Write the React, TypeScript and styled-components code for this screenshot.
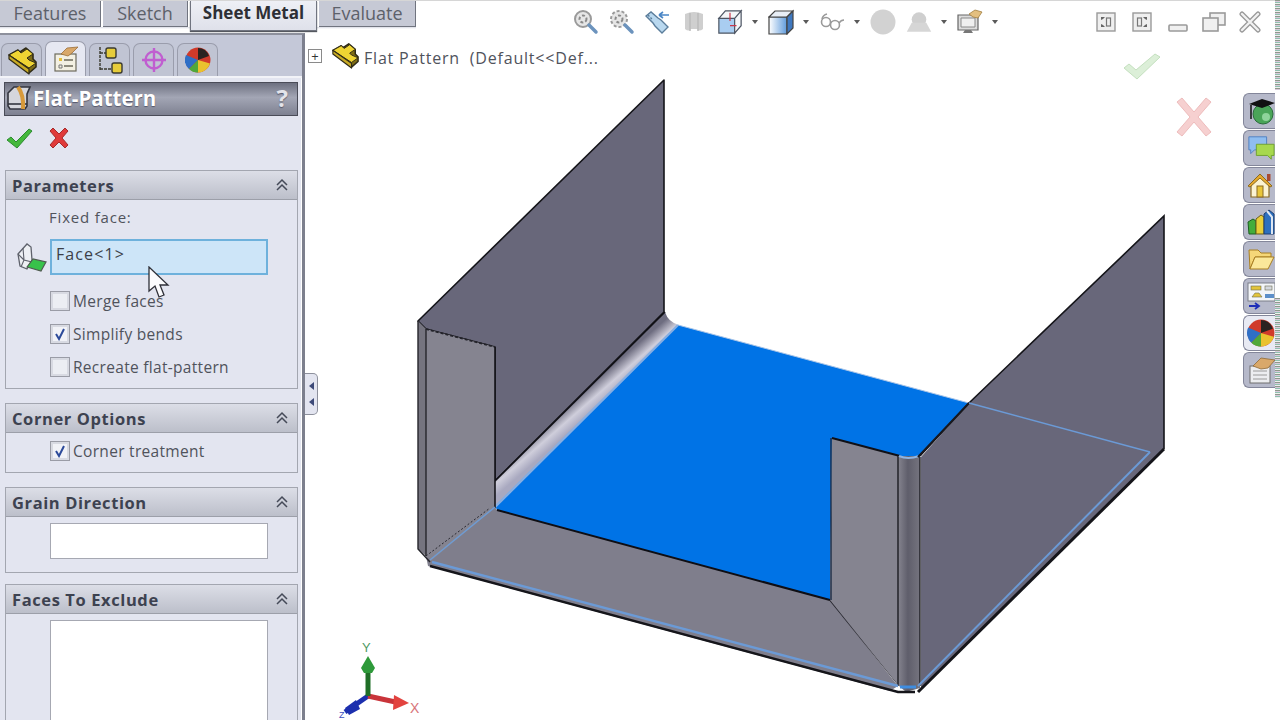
import styled, { createGlobalStyle } from "styled-components";
import { ReactNode } from "react";

const GlobalStyle = createGlobalStyle`
    html, body, #root {
        margin: 0;
        padding: 0;
        width: 1280px;
        height: 720px;
        overflow: hidden;
        background: #ffffff;
    }
    * {
        box-sizing: border-box;
    }
`;

const UI_FONT = `"Open Sans", "Noto Sans", "Liberation Sans", sans-serif`;

const Page = styled.div`
    width: 1280px;
    height: 720px;
    display: flex;
    flex-direction: column;
    font-family: ${UI_FONT};
    color: #3c3f48;
    background: #ffffff;
    overflow: hidden;
`;

const TopBar = styled.div`
    height: 33px;
    flex: none;
    display: flex;
    align-items: flex-start;
    border-top: 1px solid #d6d6d6;
`;

const TabStrip = styled.div`
    width: 416px;
    height: 32px;
    flex: none;
    display: flex;
    align-items: flex-start;
    gap: 2px;
    background: linear-gradient(#ffffff 26px, #d9dbe4 26px, #ffffff 28px);
`;

const RibbonTab = styled.div<{ $active?: boolean; $width: number }>`
    width: ${(p) => p.$width}px;
    height: ${(p) => (p.$active ? 30 : 26)}px;
    display: flex;
    align-items: center;
    justify-content: center;
    padding-bottom: ${(p) => (p.$active ? 6 : 2)}px;
    font-size: ${(p) => (p.$active ? 17 : 18)}px;
    font-weight: ${(p) => (p.$active ? 700 : 400)};
    color: ${(p) => (p.$active ? "#2d2f35" : "#5d616a")};
    background: ${(p) => (p.$active ? "linear-gradient(#eef0f6, #dfe1ea)" : "#c6c9d5")};
    border: 1px solid #70747f;
    border-top: none;
    border-left-width: ${(p) => (p.$active ? 1 : 0)}px;
    box-shadow: ${(p) => (p.$active ? "0 1px 1px #55585f" : "none")};
    white-space: nowrap;
`;

const HeadsUpBar = styled.div`
    flex: none;
    display: flex;
    align-items: center;
    gap: 10px;
    margin: 7px 0 0 157px;
    height: 28px;
`;

const HeadsUpItem = styled.div`
    display: flex;
    align-items: center;
    gap: 9px;
`;

const IconSlot = styled.span`
    width: 26px;
    height: 28px;
    display: flex;
    align-items: center;
    justify-content: center;
`;

const DropCaret = styled.span`
    width: 0;
    height: 0;
    border-left: 3.5px solid transparent;
    border-right: 3.5px solid transparent;
    border-top: 4px solid #5a5a5a;
`;

const WindowButtons = styled.div`
    flex: none;
    display: flex;
    align-items: center;
    margin: 10px 0 0 90px;
`;

const WindowSlot = styled.span`
    width: 36px;
    height: 22px;
    display: flex;
    align-items: center;
    justify-content: center;
`;

const Body = styled.div`
    flex: 1;
    min-height: 0;
    display: flex;
`;

const SidePanel = styled.div`
    width: 305px;
    flex: none;
    display: flex;
    flex-direction: column;
    background: #e3e5f0;
    border-top: 2px solid #8d909c;
    border-right: 3px solid #7d808e;
    box-shadow: inset -1px 0 0 #ffffff;
`;

const FlyoutRow = styled.div`
    height: 43px;
    flex: none;
    display: flex;
    align-items: flex-end;
    gap: 3px;
    padding-left: 1px;
    background: #c4c8d8;
    border-bottom: 2px solid #f2f3f8;
`;

const FlyoutTab = styled.div<{ $active?: boolean }>`
    width: 41px;
    height: ${(p) => (p.$active ? 35 : 33)}px;
    display: flex;
    align-items: center;
    justify-content: center;
    border: 1px solid #9a9dac;
    border-bottom: none;
    border-radius: 7px 7px 0 0;
    background: ${(p) => (p.$active ? "#e6e8f2" : "#c0c4d3")};
`;

const TitleBar = styled.div`
    height: 34px;
    flex: none;
    margin: 4px 4px 0 4px;
    padding: 0 6px 3px 0;
    display: flex;
    align-items: center;
    gap: 0;
    color: #ffffff;
    font-size: 20.5px;
    font-weight: 700;
    background: linear-gradient(#6d7080, #a3a6b5 45%, #7e8191);
    border: 1px solid #4a4c58;
    text-shadow: 0 1px 1px #55576a;
`;

const HelpMark = styled.span`
    margin-left: auto;
    padding-right: 3px;
    font-size: 24px;
    font-weight: 700;
    color: #e3e4ea;
`;

const ConfirmRow = styled.div`
    height: 49px;
    flex: none;
    padding: 0 0 6px 5px;
    display: flex;
    align-items: center;
    gap: 14px;
`;

const SectionBox = styled.section<{ $height: number; $gap: number }>`
    height: ${(p) => p.$height}px;
    flex: none;
    margin: 5px 5px ${(p) => p.$gap}px 5px;
    width: 293px;
    border: 1px solid #a3a6b0;
    border-bottom-width: ${(p) => (p.$gap ? 1 : 0)}px;
    display: flex;
    flex-direction: column;
`;

const SectionHead = styled.div`
    height: 29px;
    flex: none;
    padding: 0 8px 0 6px;
    display: flex;
    align-items: center;
    justify-content: space-between;
    font-size: 16.5px;
    letter-spacing: 0.6px;
    font-weight: 700;
    color: #3d4250;
    background: linear-gradient(#dcdee7, #bcbfca);
    border-bottom: 1px solid #9c9fa9;
`;

const SectionContent = styled.div`
    flex: 1;
    display: flex;
    flex-direction: column;
    padding-left: 44px;
    position: relative;
`;

const FieldLabel = styled.div`
    font-size: 15px;
    line-height: 20px;
    letter-spacing: 0.8px;
    margin: 7px 0 12px -1px;
    color: #50535c;
`;

const FaceInput = styled.div`
    width: 218px;
    height: 36px;
    padding: 3px 4px 0;
    font-size: 16px;
    line-height: 21px;
    letter-spacing: 1.1px;
    color: #3c3f48;
    background: #cde5f8;
    border: 2.5px solid #6eb1dc;
`;

const EmptyList = styled.div<{ $height: number; $top: number }>`
    width: 218px;
    height: ${(p) => p.$height}px;
    margin-top: ${(p) => p.$top}px;
    background: #ffffff;
    border: 1px solid #a6a8b2;
`;

const CheckRow = styled.div<{ $top: number }>`
    display: flex;
    align-items: center;
    gap: 3px;
    height: 20px;
    margin-top: ${(p) => p.$top}px;
    font-size: 15.5px;
    letter-spacing: 0.3px;
    color: #50535c;
    white-space: nowrap;
`;

const CheckBox = styled.span<{ $checked?: boolean }>`
    width: 20px;
    height: 20px;
    flex: none;
    display: flex;
    align-items: center;
    justify-content: center;
    background: ${(p) => (p.$checked ? "#f1f2f7" : "#eceef3")};
    border: 1px solid #9a9ca6;
    box-shadow: inset 0 0 0 2px #d8dae2;
`;

const SelectionIcon = styled.span`
    position: absolute;
    left: 11px;
    top: 41px;
    display: block;
    line-height: 0;
`;

const MouseCursor = styled.span`
    position: absolute;
    left: 141px;
    top: 66px;
    display: block;
    line-height: 0;
    z-index: 2;
`;

const CollapseHandle = styled.div`
    position: absolute;
    left: 305px;
    top: 373px;
    width: 13px;
    height: 42px;
    display: flex;
    flex-direction: column;
    align-items: center;
    justify-content: center;
    gap: 8px;
    background: #e3e5f0;
    border: 1px solid #8d909c;
    border-left: none;
    border-radius: 0 5px 5px 0;
`;

const HandleArrow = styled.span`
    width: 0;
    height: 0;
    border-top: 4px solid transparent;
    border-bottom: 4px solid transparent;
    border-right: 5px solid #3d4a78;
`;

const Canvas = styled.div`
    flex: 1;
    position: relative;
    min-width: 0;
`;

const ModelDrawing = styled.svg`
    position: absolute;
    left: 0;
    top: 0;
    width: 975px;
    height: 687px;
`;

const TreeCrumb = styled.div`
    position: absolute;
    left: 3px;
    top: 8px;
    display: flex;
    align-items: center;
    gap: 9px;
    font-size: 16px;
    letter-spacing: 0.8px;
    color: #50535c;
    white-space: nowrap;
`;

const CrumbText = styled.span`
    margin: 6px 0 0 -4px;
`;

const ExpandBox = styled.span`
    width: 14px;
    height: 14px;
    display: flex;
    align-items: center;
    justify-content: center;
    font-size: 13px;
    line-height: 1;
    letter-spacing: 0;
    color: #333333;
    border: 1px solid #8a8a8a;
    margin-top: 2px;
`;

const CornerMarks = styled.div`
    position: absolute;
    left: 817px;
    top: 20px;
    width: 92px;
    height: 90px;
    line-height: 0;
`;

const TaskTabs = styled.div`
    position: absolute;
    right: 5px;
    top: 60px;
    display: flex;
    flex-direction: column;
    gap: 1px;
`;

const TaskTab = styled.div<{ $active?: boolean }>`
    width: 32px;
    height: 36px;
    display: flex;
    align-items: center;
    justify-content: flex-start;
    padding-left: 3px;
    overflow: hidden;
    background: ${(p) => (p.$active ? "#e8eaf3" : "#b6b9ca")};
    border: 1px solid #83869a;
    border-right: none;
    border-radius: 6px 0 0 6px;
`;

const NoiseStrip = styled.div<{ $top: number; $height: number }>`
    position: absolute;
    right: 0;
    top: ${(p) => p.$top}px;
    width: 5px;
    height: ${(p) => p.$height}px;
    background: repeating-linear-gradient(#8f9a8a 0 1px, #d9c8dd 1px 2px, #8fc2b0 2px 3px, #eeeeee 3px 4px);
`;

const Zoom = ({ area }: { area?: boolean }) => (
    <svg width="26" height="26" viewBox="0 0 26 26">
        <circle cx="10" cy="10" r="8" fill="#e6e6e6" stroke="#9a9a9a" strokeWidth="2" strokeDasharray={area ? "3 2" : undefined} />
        <circle cx="10" cy="10" r="3.5" fill="none" stroke="#8a8a8a" strokeWidth="2" strokeDasharray="3 2" />
        <path d="M16 16l7 7" stroke="#6c93bd" strokeWidth="3.5" strokeLinecap="round" />
    </svg>
);

const Flashlight = () => (
    <svg width="26" height="26" viewBox="0 0 26 26">
        <path d="M1 7l5-4 7 6 3 2 7 7-6 6-7-7-2-3z" fill="#b9d8ef" stroke="#5b7d9b" strokeWidth="1.4" />
        <path d="M3 6l5 5" stroke="#5b7d9b" strokeWidth="1.4" strokeDasharray="2 1.5" />
        <path d="M14 6h10M14 6l4-3M14 6l4 3" stroke="#4a86c6" strokeWidth="1.6" fill="none" />
    </svg>
);

const GreyDrum = () => (
    <svg width="22" height="26" viewBox="0 0 22 26">
        <path d="M2 5q9-4 18 0v15q-4 3-6 0h-6q-2 3-6 0z" fill="#cfcfcf" />
        <path d="M7 4v18M15 4v18" stroke="#bcbcbc" strokeWidth="1.5" />
    </svg>
);

const ViewCube = () => (
    <svg width="28" height="28" viewBox="0 0 28 28">
        <path d="M2 10h17v16H2z" fill="#a9cdf1" stroke="#4d5563" strokeWidth="1.3" />
        <path d="M2 10l7-8h17l-7 8zM19 10l7-8v16l-7 8z" fill="#f4f6f8" stroke="#4d5563" strokeWidth="1.3" />
        <path d="M14 4v9M21 18h-7" stroke="#c9384a" strokeWidth="1.3" />
    </svg>
);

const ShadedCube = () => (
    <svg width="26" height="26" viewBox="0 0 26 26">
        <defs>
            <linearGradient id="cubeFace" x1="0" x2="1">
                <stop offset="0" stopColor="#ffffff" />
                <stop offset="1" stopColor="#5f9bdc" />
            </linearGradient>
        </defs>
        <path d="M1 8h18v17H1z" fill="url(#cubeFace)" stroke="#444" strokeWidth="1.2" />
        <path d="M1 8l6-6h18l-6 6z" fill="#e8eef6" stroke="#444" strokeWidth="1.2" />
        <path d="M19 8l6-6v17l-6 6z" fill="#3f78bf" stroke="#444" strokeWidth="1.2" />
    </svg>
);

const Glasses = () => (
    <svg width="26" height="22" viewBox="0 0 26 22">
        <circle cx="7" cy="11" r="4.5" fill="none" stroke="#9a9a9a" strokeWidth="1.6" />
        <circle cx="16" cy="14" r="4.5" fill="none" stroke="#9a9a9a" strokeWidth="1.6" />
        <path d="M11 12l1 0M20 12q2-3 5-3M3 8q1-4 5-5" fill="none" stroke="#9a9a9a" strokeWidth="1.6" />
    </svg>
);

const GreyBall = () => (
    <svg width="26" height="26" viewBox="0 0 26 26">
        <circle cx="13" cy="13" r="12.5" fill="#d2d2d2" />
    </svg>
);

const GreyScene = () => (
    <svg width="32" height="26" viewBox="0 0 32 26">
        <circle cx="16" cy="10" r="9" fill="#cfcfcf" />
        <path d="M1 25l6-11h18l6 11z" fill="#d6d6d6" />
    </svg>
);

const Monitor = () => (
    <svg width="26" height="26" viewBox="0 0 26 26">
        <path d="M1 6h20v15H1z" fill="#dcdcdc" stroke="#666" strokeWidth="1.2" />
        <path d="M4 9h14v9H4z" fill="#efefef" stroke="#8a8a8a" />
        <path d="M8 21h6l2 3H6z" fill="#777" />
        <path d="M12 5l6-4 7 2-4 6-5-1z" fill="#e3bf7f" stroke="#a17e3f" strokeWidth="0.8" />
    </svg>
);

const FrameLeft = ({ flip }: { flip?: boolean }) => (
    <svg width="20" height="20" viewBox="0 0 20 20">
        <rect x="1" y="1" width="18" height="18" fill="#efefef" stroke="#9a9a9a" strokeWidth="1.4" />
        <g transform={flip ? "matrix(-1 0 0 1 20 0)" : undefined}>
            <path d="M9 5H5v3l2-1zM9 15H5v-3l2 1z" fill="#666" />
            <rect x="10.5" y="6" width="4" height="8" fill="none" stroke="#777" strokeWidth="1.2" />
        </g>
    </svg>
);

const MinGlyph = styled.svg`
    margin-top: 10px;
`;

const WinMin = () => (
    <MinGlyph width="20" height="12" viewBox="0 0 20 12">
        <rect x="1" y="4" width="18" height="6" rx="1" fill="#f0f0f0" stroke="#9a9a9a" strokeWidth="1.6" />
    </MinGlyph>
);

const WinRestore = () => (
    <svg width="26" height="22" viewBox="0 0 26 22">
        <rect x="9" y="2" width="15" height="12" fill="#f0f0f0" stroke="#9a9a9a" strokeWidth="1.6" />
        <rect x="2" y="7" width="15" height="13" fill="#f0f0f0" stroke="#9a9a9a" strokeWidth="1.6" />
    </svg>
);

const WinClose = () => (
    <svg width="22" height="22" viewBox="0 0 22 22">
        <path d="M3 3l16 16M19 3L3 19" stroke="#9a9a9a" strokeWidth="5" strokeLinecap="round" />
        <path d="M3 3l16 16M19 3L3 19" stroke="#f2f2f2" strokeWidth="2.4" strokeLinecap="round" />
    </svg>
);

const PartBlock = ({ size = 30 }: { size?: number }) => (
    <svg width={size} height={size} viewBox="0 0 30 30">
        <path d="M2 10l9-5 2 2 6-4 7 6v5l3 3v5l-7 6z" fill="#7e6c14" stroke="#2f2b18" strokeWidth="1.6" strokeLinejoin="round" />
        <path d="M2 10l9-5 3 3 6-4 6 5-6 4 2 2-0 0 7 3-7 5z" fill="#efd433" stroke="#2f2b18" strokeWidth="1" strokeLinejoin="round" />
        <path d="M2 10v4l20 15v-5z" fill="#c9ab24" stroke="#2f2b18" strokeWidth="1.2" strokeLinejoin="round" />
    </svg>
);

const PropertyIcon = () => (
    <svg width="28" height="28" viewBox="0 0 28 28">
        <rect x="3" y="9" width="21" height="17" fill="#f3f0e3" stroke="#6d6a5c" strokeWidth="1.2" />
        <path d="M7 13h3v3H7z" fill="#e5bf3c" />
        <path d="M7 20h3v3H7z" fill="none" stroke="#777" />
        <path d="M12 15h9M12 21h9" stroke="#6d6a5c" strokeWidth="1.4" />
        <path d="M9 9l6-6 11-1-6 6-4 3z" fill="#d9a86a" stroke="#9a6f3a" strokeWidth="0.8" />
    </svg>
);

const ConfigTree = () => (
    <svg width="26" height="28" viewBox="0 0 26 28">
        <path d="M3 1v24M3 7h6M3 23h11" stroke="#3a3a30" strokeWidth="1.4" strokeDasharray="3 1" fill="none" />
        <rect x="9" y="2" width="10" height="10" rx="2" fill="#e6cc3a" stroke="#3a3a30" strokeWidth="1.4" />
        <rect x="15" y="17" width="10" height="10" rx="2" fill="#e6cc3a" stroke="#3a3a30" strokeWidth="1.4" />
    </svg>
);

const CrossTarget = () => (
    <svg width="26" height="26" viewBox="0 0 26 26">
        <circle cx="13" cy="13" r="8.5" fill="none" stroke="#c05ed0" strokeWidth="2.4" />
        <path d="M13 1v24M1 13h24" stroke="#c05ed0" strokeWidth="2.4" />
    </svg>
);

const AppearanceBall = ({ size = 26 }: { size?: number }) => (
    <svg width={size} height={size} viewBox="0 0 26 26">
        <circle cx="13" cy="13" r="12.5" fill="#d03a2a" />
        <path d="M13 13L1 8a12.5 12.5 0 0 0 3 14z" fill="#2f6fc6" />
        <path d="M13 13L4 22a12.5 12.5 0 0 0 9 3.5z" fill="#4fa83a" />
        <path d="M13 13v12.5a12.5 12.5 0 0 0 12-9z" fill="#eac22e" />
        <path d="M13 13V1a12 12 0 0 1 11 8z" fill="#2b2320" />
    </svg>
);

const FlatPatternIcon = () => (
    <svg width="28" height="28" viewBox="0 0 28 28">
        <path d="M3 9l6-6h16l-3 7v12l-2 3H5l-2-3z" fill="#d5d6dc" stroke="#33353f" strokeWidth="1.6" />
        <path d="M3 20h19" stroke="#33353f" strokeWidth="1.6" />
        <path d="M13 3q6 8 5 22" fill="none" stroke="#d89a3a" strokeWidth="4" />
    </svg>
);

const GreenCheck = () => (
    <svg width="28" height="24" viewBox="0 0 28 24">
        <path d="M2 14l4-3 5 5L24 3l3 2-15 17z" fill="#45b83c" stroke="#2b8a2f" strokeWidth="1" />
    </svg>
);

const RedCross = () => (
    <svg width="24" height="24" viewBox="0 0 24 24">
        <path d="M3 5l3-3 6 6 6-6 3 3-6 7 6 7-3 3-6-6-6 6-3-3 6-7z" fill="#e03a3a" stroke="#a62b2b" strokeWidth="1" />
    </svg>
);

const Chevrons = () => (
    <svg width="14" height="14" viewBox="0 0 14 14">
        <path d="M2 7l5-5 5 5M2 12l5-5 5 5" fill="none" stroke="#454a58" strokeWidth="1.5" />
    </svg>
);

const FaceIcon = () => (
    <svg width="30" height="32" viewBox="0 0 30 32">
        <path d="M1 13L10 3l4 3 1 13-5 9-7-3z" fill="#eef0f4" stroke="#5f626c" strokeWidth="1.3" />
        <path d="M6 7l1 12 8 2M1 13l6 6M7 19l-3 7" fill="none" stroke="#5f626c" strokeWidth="1.1" />
        <path d="M10 26l6-8 13 3-5 9z" fill="#38c24a" stroke="#4f5a50" strokeWidth="1.2" />
    </svg>
);

const Pointer = () => (
    <svg width="24" height="34" viewBox="0 0 24 34">
        <path d="M2 1v24l6-5 4 11 5-2-4-10h8z" fill="#fbfbfd" stroke="#2f3038" strokeWidth="1.3" />
    </svg>
);

const TickMark = () => (
    <svg width="14" height="14" viewBox="0 0 14 14">
        <path d="M3 7l3 5 5-10" fill="none" stroke="#2c4a9a" strokeWidth="2" />
    </svg>
);

const LearnIcon = () => (
    <svg width="28" height="28" viewBox="0 0 28 28">
        <circle cx="16" cy="17" r="10" fill="#4aa558" stroke="#2b6b3c" />
        <circle cx="19" cy="20" r="4" fill="#8fd49a" />
        <path d="M2 7l13-5 13 4-13 5z" fill="#111111" />
        <path d="M4 8v14" stroke="#111111" strokeWidth="1.5" />
    </svg>
);

const ChatIcon = () => (
    <svg width="30" height="28" viewBox="0 0 30 28">
        <path d="M2 2h19v14H8l-4 4v-4H2z" fill="#8fbdf0" stroke="#4f7fc0" />
        <path d="M10 10h19v12h-3v4l-4-4H10z" fill="#a7d84e" stroke="#6fa02e" />
    </svg>
);

const HomeIcon = () => (
    <svg width="26" height="26" viewBox="0 0 26 26">
        <path d="M4 12v13h18V12L13 3z" fill="#fbf3d2" stroke="#8a6a22" strokeWidth="1.2" />
        <path d="M1 14L13 2l12 12-2 1L13 6 3 15z" fill="#e5a92e" stroke="#8a6a22" />
        <rect x="20" y="2" width="3.5" height="7" fill="#a84a32" />
        <rect x="10" y="14" width="6" height="11" fill="#e9c638" stroke="#8a6a22" />
    </svg>
);

const BooksIcon = () => (
    <svg width="28" height="28" viewBox="0 0 28 28">
        <path d="M1 14l5-3 3 2v13H2z" fill="#43ad3c" stroke="#1c5e22" />
        <path d="M9 11l5-4 3 2v17H9z" fill="#e8cf3a" stroke="#6a5c1a" />
        <path d="M17 6l5-4 5 4v20H17z" fill="#2d70bf" stroke="#1d3e70" />
        <path d="M20 3l5 6v17" fill="none" stroke="#dfe7f2" strokeWidth="2" />
    </svg>
);

const FolderIcon = () => (
    <svg width="28" height="24" viewBox="0 0 28 24">
        <path d="M2 3h9l3 3h10v4H8L3 22z" fill="#f5d778" stroke="#a87e23" />
        <path d="M3 22l5-12h19l-6 12z" fill="#fbe89a" stroke="#a87e23" />
    </svg>
);

const ViewPaletteIcon = () => (
    <svg width="28" height="28" viewBox="0 0 28 28">
        <rect x="1" y="1" width="27" height="18" fill="#f3f5f8" stroke="#7b7e88" />
        <rect x="4" y="4" width="10" height="4" fill="#e2c43b" stroke="#6b6b50" strokeWidth="0.6" />
        <path d="M5 15l3-4h4l3 4z" fill="#e2c43b" stroke="#6b6b50" strokeWidth="0.6" />
        <rect x="18" y="4" width="7" height="4" fill="#d4d8de" stroke="#6b6b50" strokeWidth="0.6" />
        <rect x="18" y="12" width="9" height="4" fill="#5d8fc9" />
        <path d="M2 24h9M8 21l4 3-4 3" fill="none" stroke="#1f2fb8" strokeWidth="1.8" />
    </svg>
);

const ClipboardIcon = () => (
    <svg width="28" height="28" viewBox="0 0 28 28">
        <rect x="3" y="10" width="20" height="17" fill="#ecedf0" stroke="#6f6f6f" />
        <path d="M6 15h14M6 19h14M6 23h14" stroke="#9a9a9a" />
        <path d="M6 10l8-8 14 2-7 8-7 1z" fill="#d9a86a" stroke="#8f6b3a" strokeWidth="0.8" />
    </svg>
);

const Model = () => (
    <ModelDrawing viewBox="305 33 975 687">
        <defs>
            <linearGradient id="bendLight" gradientUnits="userSpaceOnUse" x1="578" y1="396" x2="592" y2="412">
                <stop offset="0" stopColor="#6e6d80" />
                <stop offset="0.55" stopColor="#cfcedb" />
                <stop offset="1" stopColor="#a9a9c0" />
            </linearGradient>
            <linearGradient id="bendDark" x1="0" x2="1">
                <stop offset="0" stopColor="#85848f" />
                <stop offset="0.45" stopColor="#5f5e6b" />
                <stop offset="1" stopColor="#75747f" />
            </linearGradient>
        </defs>
        {/* left wall */}
        <path d="M418 321L664 80V312L495 481V347L426 329Z" fill="#68677a" stroke="#15151a" strokeWidth="1.6" strokeLinejoin="round" />
        {/* bend along the left wall */}
        <path d="M495 481L665 312Q668 322 679 325L495 507Z" fill="url(#bendLight)" />
        <path d="M495 481L665 312" stroke="#111116" strokeWidth="1.6" />
        {/* floor */}
        <path d="M678 325L969 403L918 457H900L832 438L830 600L497 510L495 506Z" fill="#0073e6" />
        <path d="M678 325L969 403" stroke="#a9c5e8" strokeWidth="1" />
        <path d="M495 507L678 325" stroke="#86aee2" strokeWidth="2.4" />
        {/* front flange */}
        <path d="M495 507L497 510L830 600L898 686L890 691L428 566L426 556Z" fill="#7f7e8c" />
        <path d="M497 510L830 600" stroke="#0e0e14" strokeWidth="2" />
        <path d="M830 600L898 684" stroke="#23232a" strokeWidth="1.8" />
        {/* left corner tab */}
        <path d="M426 329L495 347V507L432 560L426 556Z" fill="#858490" />
        <path d="M418 321L426 329V556L418 549Z" fill="#75747f" />
        <path d="M426 329L495 347" stroke="#23232a" strokeWidth="1.8" strokeDasharray="3 2" />
        <path d="M495 347V508" stroke="#15151a" strokeWidth="1.6" />
        <path d="M426 329V556M418 321V549L430 562" stroke="#25252b" strokeWidth="1.4" fill="none" />
        <path d="M430 560L495 507" stroke="#6f9bd2" strokeWidth="1.5" />
        <path d="M426 556L490 508" stroke="#2a2a32" strokeWidth="1" strokeDasharray="2 2" />
        {/* right corner tab */}
        <path d="M832 438L898 456V685L830 600Z" fill="#858490" />
        <path d="M832 438L900 456" stroke="#101016" strokeWidth="2" />
        <path d="M831 438V600" stroke="#1a2a44" strokeWidth="1.4" />
        <path d="M898 456H920V688L906 692L898 685Z" fill="url(#bendDark)" />
        <path d="M898 456V686M920 457V686" stroke="#1c1c22" strokeWidth="1.4" />
        <path d="M899 456Q908 460 919 456" stroke="#8fb4e2" strokeWidth="2" fill="none" />
        {/* right wall */}
        <path d="M921 457L969 403L1164 216V449L921 690Z" fill="#68677a" />
        <path d="M920 456L969 403L1164 216V449" fill="none" stroke="#15151a" strokeWidth="1.6" />
        <path d="M918 457L969 403" stroke="#18181e" strokeWidth="2" />
        <path d="M969 403L1150 452" stroke="#6b9ad6" strokeWidth="1.4" />
        {/* bottom edges */}
        <path d="M1164 449L918 692" stroke="#15151a" strokeWidth="3" />
        <path d="M1150 452L918 686" stroke="#6b9ad6" strokeWidth="2" />
        <path d="M430 566L898 692L915 692" fill="none" stroke="#15151a" strokeWidth="2.4" />
        <path d="M432 562L898 686" stroke="#6b9ad6" strokeWidth="2.4" />
        <path d="M900 687h16" stroke="#3f8de0" strokeWidth="3" />
        {/* triad */}
        <path d="M368 696L345 712" stroke="#1c2fae" strokeWidth="5" />
        <path d="M356 700l-11 8 4 7 11-6z" fill="#1c2fae" />
        <path d="M368 696l32 7" stroke="#c9343a" strokeWidth="5" />
        <path d="M394 695l15 8-16 7z" fill="#e2433f" />
        <path d="M368 696v-30" stroke="#1f6e26" strokeWidth="5" />
        <path d="M368 656l7 12-3 5h-8l-3-5z" fill="#2e9a3a" />
        <text x="362" y="652" fontSize="13" fill="#4f9a66" fontFamily="Liberation Sans, sans-serif">Y</text>
        <text x="410" y="713" fontSize="14" fill="#d8747a" fontFamily="Liberation Sans, sans-serif">X</text>
        <text x="339" y="718" fontSize="9" fill="#3f4fc0" fontFamily="Liberation Sans, sans-serif">Z</text>
    </ModelDrawing>
);

const headsUp: { icon: ReactNode; caret?: boolean }[] = [
    { icon: <Zoom /> },
    { icon: <Zoom area /> },
    { icon: <Flashlight /> },
    { icon: <GreyDrum /> },
    { icon: <ViewCube />, caret: true },
    { icon: <ShadedCube />, caret: true },
    { icon: <Glasses />, caret: true },
    { icon: <GreyBall /> },
    { icon: <GreyScene />, caret: true },
    { icon: <Monitor />, caret: true },
];

const taskIcons = [<LearnIcon />, <ChatIcon />, <HomeIcon />, <BooksIcon />, <FolderIcon />, <ViewPaletteIcon />, <AppearanceBall size={28} />, <ClipboardIcon />];

export default function App() {
    return (
        <Page>
            <GlobalStyle />
            <TopBar>
                <TabStrip>
                    <RibbonTab $width={101}>Features</RibbonTab>
                    <RibbonTab $width={85}>Sketch</RibbonTab>
                    <RibbonTab $width={127} $active>Sheet Metal</RibbonTab>
                    <RibbonTab $width={97}>Evaluate</RibbonTab>
                </TabStrip>
                <HeadsUpBar>
                    {headsUp.map((item, i) => (
                        <HeadsUpItem key={i}>
                            <IconSlot>{item.icon}</IconSlot>
                            {item.caret && <DropCaret />}
                        </HeadsUpItem>
                    ))}
                </HeadsUpBar>
                <WindowButtons>
                    <WindowSlot><FrameLeft /></WindowSlot>
                    <WindowSlot><FrameLeft flip /></WindowSlot>
                    <WindowSlot><WinMin /></WindowSlot>
                    <WindowSlot><WinRestore /></WindowSlot>
                    <WindowSlot><WinClose /></WindowSlot>
                </WindowButtons>
            </TopBar>
            <Body>
                <SidePanel>
                    <FlyoutRow>
                        <FlyoutTab><PartBlock /></FlyoutTab>
                        <FlyoutTab $active><PropertyIcon /></FlyoutTab>
                        <FlyoutTab><ConfigTree /></FlyoutTab>
                        <FlyoutTab><CrossTarget /></FlyoutTab>
                        <FlyoutTab><AppearanceBall /></FlyoutTab>
                    </FlyoutRow>
                    <TitleBar>
                        <FlatPatternIcon />
                        Flat-Pattern
                        <HelpMark>?</HelpMark>
                    </TitleBar>
                    <ConfirmRow>
                        <GreenCheck />
                        <RedCross />
                    </ConfirmRow>
                    <SectionBox $height={219} $gap={9}>
                        <SectionHead>Parameters<Chevrons /></SectionHead>
                        <SectionContent>
                            <FieldLabel>Fixed face:</FieldLabel>
                            <SelectionIcon><FaceIcon /></SelectionIcon>
                            <FaceInput>Face&lt;1&gt;</FaceInput>
                            <MouseCursor><Pointer /></MouseCursor>
                            <CheckRow $top={16}><CheckBox />Merge faces</CheckRow>
                            <CheckRow $top={13}><CheckBox $checked><TickMark /></CheckBox>Simplify bends</CheckRow>
                            <CheckRow $top={13}><CheckBox />Recreate flat-pattern</CheckRow>
                        </SectionContent>
                    </SectionBox>
                    <SectionBox $height={70} $gap={9}>
                        <SectionHead>Corner Options<Chevrons /></SectionHead>
                        <SectionContent>
                            <CheckRow $top={8}><CheckBox $checked><TickMark /></CheckBox>Corner treatment</CheckRow>
                        </SectionContent>
                    </SectionBox>
                    <SectionBox $height={86} $gap={6}>
                        <SectionHead>Grain Direction<Chevrons /></SectionHead>
                        <SectionContent>
                            <EmptyList $height={36} $top={6} />
                        </SectionContent>
                    </SectionBox>
                    <SectionBox $height={140} $gap={0}>
                        <SectionHead>Faces To Exclude<Chevrons /></SectionHead>
                        <SectionContent>
                            <EmptyList $height={110} $top={6} />
                        </SectionContent>
                    </SectionBox>
                </SidePanel>
                <CollapseHandle>
                    <HandleArrow />
                    <HandleArrow />
                </CollapseHandle>
                <Canvas>
                    <Model />
                    <TreeCrumb>
                        <ExpandBox>+</ExpandBox>
                        <PartBlock size={28} />
                        <CrumbText>Flat Pattern&nbsp;&nbsp;(Default&lt;&lt;Def...</CrumbText>
                    </TreeCrumb>
                    <CornerMarks>
                        <svg width="92" height="90" viewBox="0 0 92 90">
                            <path d="M2 15l5-4 7 6L33 1l5 3-23 22z" fill="#dcefd8" stroke="#c4e0bf" />
                            <path d="M55 49l5-4 12 14 12-14 5 4-13 15 13 15-5 4-12-14-12 14-5-4 13-15z" fill="#f6d0d0" stroke="#eebcbc" />
                        </svg>
                    </CornerMarks>
                    <TaskTabs>
                        {taskIcons.map((icon, i) => (
                            <TaskTab key={i} $active={i === 6}>{icon}</TaskTab>
                        ))}
                    </TaskTabs>
                    <NoiseStrip $top={-33} $height={90} />
                    <NoiseStrip $top={265} $height={100} />
                </Canvas>
            </Body>
        </Page>
    );
}
